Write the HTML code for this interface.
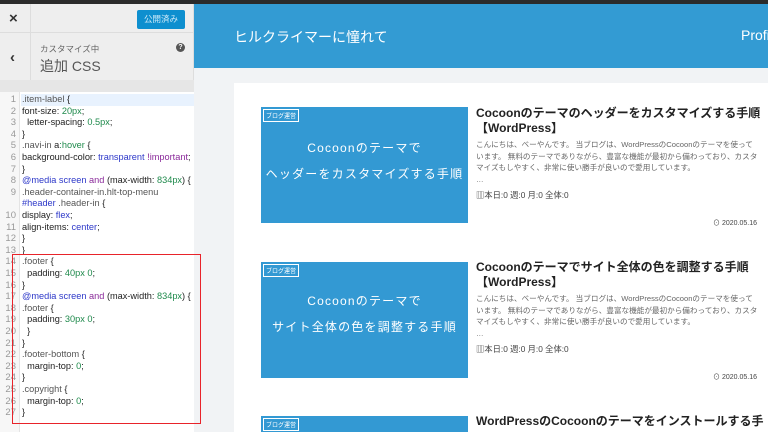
<!DOCTYPE html>
<html><head><meta charset="utf-8"><style>
*{margin:0;padding:0;box-sizing:border-box}
html,body{width:768px;height:432px;overflow:hidden}
body{position:relative;background:#f1f3f5;font-family:"Liberation Sans","Noto Sans CJK JP",sans-serif}
.abs{position:absolute}
#top{left:0;top:0;width:768px;height:4px;background:#2b2b2b}
#side{left:0;top:4px;width:194px;height:428px;background:#eeeeee;border-right:1px solid #ddd}
#code{left:0;top:92px;width:194px;height:340px;background:#fff}
#gut{left:0;top:92px;width:20px;height:340px;background:#f7f7f7;border-right:1px solid #e4e4e4}
.ln{position:absolute;left:0;width:16px;text-align:right;font-size:9.5px;color:#999}
.cl{position:absolute;left:22px;font-size:9.2px;color:#222;white-space:nowrap}
.s{color:#555}.n{color:#1f8a4c}.k{color:#2d38c9}.p{color:#8a2a9a}
#hdr{left:194px;top:4px;width:574px;height:64px;background:#339bd3}
.card{left:234px;top:83px;width:534px;height:349px;background:#fff}
.img{background:#3399d3;color:#fff;text-align:center;font-size:12px;letter-spacing:1.2px;white-space:nowrap;overflow:hidden}
.tag{position:absolute;left:2px;top:2px;border:1px solid #fff;font-size:6px;padding:1px 2px;letter-spacing:0}
.t{font-size:12px;font-weight:bold;color:#222;line-height:15px;white-space:nowrap}
.e{font-size:7.6px;color:#666;line-height:11.5px;width:283px}
.m{font-size:8.3px;color:#444}
.d{font-size:7px;color:#444}
</style></head><body>
<div id="top" class="abs"></div>
<div id="side" class="abs"></div>
<div class="abs" style="left:0;top:4px;width:194px;height:29px;border-bottom:1px solid #ddd"></div>
<div class="abs" style="left:30px;top:4px;width:1px;height:76px;background:#ddd"></div>
<div class="abs" style="left:9px;top:10px;font-size:15px;color:#333;font-weight:bold">×</div>
<div class="abs" style="left:137px;top:10px;width:48px;height:19px;background:#0e8fcf;border-radius:2px;color:#cde9f8;font-size:8.5px;text-align:center;line-height:19px">公開済み</div>
<div class="abs" style="left:10px;top:49px;font-size:15px;color:#333;font-weight:bold">‹</div>
<div class="abs" style="left:40px;top:43px;font-size:8.5px;color:#666">カスタマイズ中</div>
<div class="abs" style="left:40px;top:56px;font-size:14px;color:#555">追加 CSS</div>
<div class="abs" style="left:176px;top:43px;width:9px;height:9px;border-radius:50%;background:#555;color:#fff;font-size:7px;text-align:center;line-height:9px;font-weight:bold">?</div>
<div class="abs" style="left:0;top:80px;width:194px;height:12px;background:#e6e6e6"></div>
<div class="abs" style="left:194px;top:14px;width:4px;height:28px;background:#339bd3"></div>
<div id="code" class="abs"></div>
<div id="gut" class="abs"></div>
<div class="abs" style="left:21px;top:94px;width:173px;height:12px;background:#e8f2fe"></div>
<div class="abs" style="left:0;top:94px;width:194px;height:330px;overflow:hidden">
<div class="ln" style="top:0">1</div><div class="cl" style="top:0"><span class="s">.item-label</span> {</div>
<div class="ln" style="top:11.6px">2</div><div class="cl" style="top:11.6px">font-size: <span class="n">20px</span>;</div>
<div class="ln" style="top:23.2px">3</div><div class="cl" style="top:23.2px">&nbsp; letter-spacing: <span class="n">0.5px</span>;</div>
<div class="ln" style="top:34.8px">4</div><div class="cl" style="top:34.8px">}</div>
<div class="ln" style="top:46.4px">5</div><div class="cl" style="top:46.4px"><span class="s">.navi-in</span> a<span class="n">:hover</span> {</div>
<div class="ln" style="top:58px">6</div><div class="cl" style="top:58px">background-color: <span class="k">transparent</span> <span class="p">!important</span>;</div>
<div class="ln" style="top:69.6px">7</div><div class="cl" style="top:69.6px">}</div>
<div class="ln" style="top:81.2px">8</div><div class="cl" style="top:81.2px"><span class="k">@media screen</span> <span class="p">and</span> (max-width: <span class="n">834px</span>) {</div>
<div class="ln" style="top:92.8px">9</div><div class="cl" style="top:92.8px"><span class="s">.header-container-in.hlt-top-menu</span></div>
<div class="cl" style="top:104.4px"><span class="k">#header</span> <span class="s">.header-in</span> {</div>
<div class="ln" style="top:116px">10</div><div class="cl" style="top:116px">display: <span class="k">flex</span>;</div>
<div class="ln" style="top:127.6px">11</div><div class="cl" style="top:127.6px">align-items: <span class="k">center</span>;</div>
<div class="ln" style="top:139.2px">12</div><div class="cl" style="top:139.2px">}</div>
<div class="ln" style="top:150.8px">13</div><div class="cl" style="top:150.8px">}</div>
<div class="ln" style="top:162.4px">14</div><div class="cl" style="top:162.4px"><span class="s">.footer</span> {</div>
<div class="ln" style="top:174px">15</div><div class="cl" style="top:174px">&nbsp; padding: <span class="n">40px 0</span>;</div>
<div class="ln" style="top:185.6px">16</div><div class="cl" style="top:185.6px">}</div>
<div class="ln" style="top:197.2px">17</div><div class="cl" style="top:197.2px"><span class="k">@media screen</span> <span class="p">and</span> (max-width: <span class="n">834px</span>) {</div>
<div class="ln" style="top:208.8px">18</div><div class="cl" style="top:208.8px"><span class="s">.footer</span> {</div>
<div class="ln" style="top:220.4px">19</div><div class="cl" style="top:220.4px">&nbsp; padding: <span class="n">30px 0</span>;</div>
<div class="ln" style="top:232px">20</div><div class="cl" style="top:232px">&nbsp; }</div>
<div class="ln" style="top:243.6px">21</div><div class="cl" style="top:243.6px">}</div>
<div class="ln" style="top:255.2px">22</div><div class="cl" style="top:255.2px"><span class="s">.footer-bottom</span> {</div>
<div class="ln" style="top:266.8px">23</div><div class="cl" style="top:266.8px">&nbsp; margin-top: <span class="n">0</span>;</div>
<div class="ln" style="top:278.4px">24</div><div class="cl" style="top:278.4px">}</div>
<div class="ln" style="top:290px">25</div><div class="cl" style="top:290px"><span class="s">.copyright</span> {</div>
<div class="ln" style="top:301.6px">26</div><div class="cl" style="top:301.6px">&nbsp; margin-top: <span class="n">0</span>;</div>
<div class="ln" style="top:313.2px">27</div><div class="cl" style="top:313.2px">}</div>
</div>
<div class="abs" style="left:12px;top:254px;width:189px;height:170px;border:1.5px solid #e8232a"></div>

<div id="hdr" class="abs"></div>
<div class="abs" style="left:234px;top:27px;font-size:14px;color:#fff">ヒルクライマーに憧れて</div>
<div class="abs" style="left:741px;top:27px;font-size:14px;color:#fff">Profi</div>
<div class="card abs"></div>

<div class="abs img" style="left:261px;top:107px;width:207px;height:116px">
<div class="tag">ブログ運営</div><div style="position:absolute;top:32px;width:100%">Cocoonのテーマで</div><div style="position:absolute;top:58px;width:100%">ヘッダーをカスタマイズする手順</div></div>
<div class="abs" style="left:476px;top:106px;width:290px">
<div class="t">Cocoonのテーマのヘッダーをカスタマイズする手順<br>【WordPress】</div>
<div class="e" style="margin-top:3px">こんにちは、ベーやんです。 当ブログは、WordPressのCocoonのテーマを使っています。 無料のテーマでありながら、豊富な機能が最初から備わっており、カスタマイズもしやすく、非常に使い勝手が良いので愛用しています。<br>…</div>
<div class="m" style="margin-top:4px">▥本日:0 週:0 月:0 全体:0</div></div>
<div class="abs d" style="left:713px;top:218px">⊙ 2020.05.16</div>

<div class="abs img" style="left:261px;top:262px;width:207px;height:116px">
<div class="tag">ブログ運営</div><div style="position:absolute;top:30px;width:100%">Cocoonのテーマで</div><div style="position:absolute;top:56px;width:100%">サイト全体の色を調整する手順</div></div>
<div class="abs" style="left:476px;top:260px;width:290px">
<div class="t">Cocoonのテーマでサイト全体の色を調整する手順<br>【WordPress】</div>
<div class="e" style="margin-top:3px">こんにちは、ベーやんです。 当ブログは、WordPressのCocoonのテーマを使っています。 無料のテーマでありながら、豊富な機能が最初から備わっており、カスタマイズもしやすく、非常に使い勝手が良いので愛用しています。<br>…</div>
<div class="m" style="margin-top:4px">▥本日:0 週:0 月:0 全体:0</div></div>
<div class="abs d" style="left:713px;top:372px">⊙ 2020.05.16</div>

<div class="abs img" style="left:261px;top:416px;width:207px;height:16px"><div class="tag">ブログ運営</div></div>
<div class="abs t" style="left:476px;top:414px;width:290px;overflow:hidden">WordPressのCocoonのテーマをインストールする手</div>
</body></html>
